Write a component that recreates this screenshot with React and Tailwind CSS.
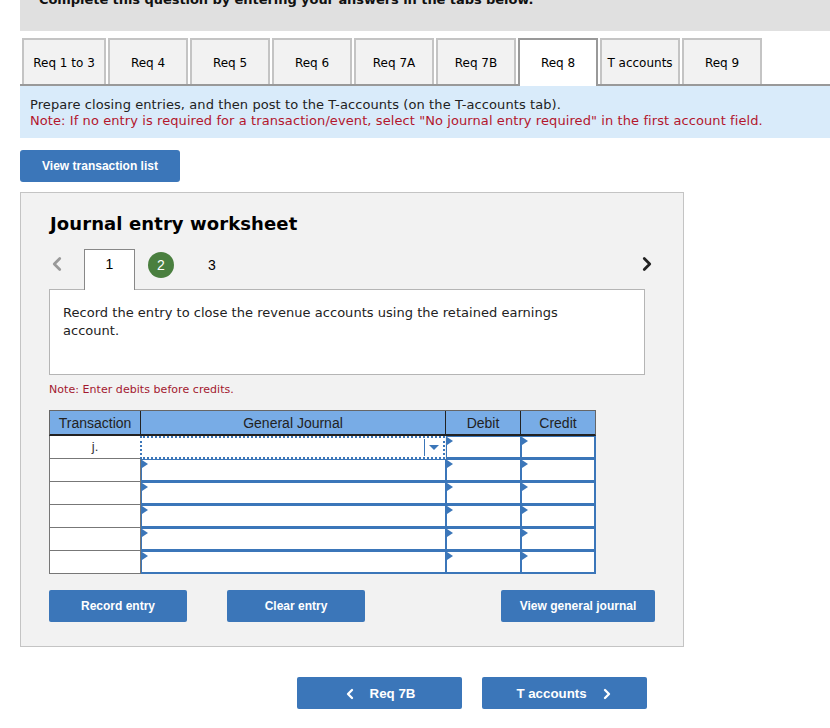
import { ChevronLeft, ChevronRight } from "lucide-react";

const verdana = "font-['DejaVu_Sans',Verdana,sans-serif]";
const arial = "font-['Liberation_Sans',Arial,sans-serif]";

const tabs = ["Req 1 to 3", "Req 4", "Req 5", "Req 6", "Req 7A", "Req 7B", "Req 8", "T accounts", "Req 9"];

const Marker = () => (
  <span className="absolute left-0 top-0 w-0 h-0 border-y-[4px] border-y-transparent border-l-[6px] border-l-[#3b76b9]"></span>
);

const Row = ({ first }) => (
  <div className="flex h-[23px]">
    <div className={`w-[92px] shrink-0 bg-white border-l border-r border-b border-[#777] flex items-center justify-center text-[13px] text-[#333] ${arial}`}>
      {first ? "j." : ""}
    </div>
    {first ? (
      <div className="w-[305px] shrink-0 bg-white border-2 border-dotted border-[#3b76b9] -ml-px flex justify-end">
        <div className="w-[19px] my-px border-l border-[#3b76b9] flex items-center justify-center">
          <span className="w-0 h-0 border-x-[5px] border-x-transparent border-t-[5px] border-t-[#3b76b9]"></span>
        </div>
      </div>
    ) : (
      <div className="relative w-[305px] shrink-0 bg-white border border-b-2 border-[#3b76b9]">
        <Marker />
      </div>
    )}
    <div className={`relative w-[75px] shrink-0 bg-white border border-b-2 border-[#3b76b9] ${first ? "ml-px" : ""}`}>
      <Marker />
    </div>
    <div className="relative w-[75px] shrink-0 bg-white border border-b-2 border-r-2 border-[#3b76b9]">
      <Marker />
    </div>
  </div>
);

const App = () => {
  return (
    <div className={`w-[830px] h-[728px] overflow-hidden bg-white text-black ${verdana}`}>
      <div className="ml-5 h-[31px] bg-[#e0e0e0] overflow-hidden pl-[19px]">
        <div className="-mt-[9px] text-[13px] leading-[18px] font-bold tracking-[-0.06px] text-[#111] whitespace-nowrap">
          Complete this question by entering your answers in the tabs below.
        </div>
      </div>

      <div className="ml-5 mt-[7px] h-[48px] pl-0.5 flex gap-0.5 border-b-2 border-[#999]">
        {tabs.map((tab) => {
          const active = tab === "Req 8";
          return (
            <div
              key={tab}
              className={`${tab === "Req 1 to 3" ? "w-[84px]" : "w-20"} flex items-center justify-center text-[12px] whitespace-nowrap border-2 border-b-0 ${
                active ? "bg-white border-[#999] h-[48px]" : "bg-[#f2f2f2] border-[#c4c4c4] h-[46px] pt-0.5"
              }`}
            >
              {tab}
            </div>
          );
        })}
      </div>

      <div className="ml-5 h-[52px] bg-[#d9ebfa] pl-2.5 pt-[11px] text-[13px] leading-4 tracking-[0.087px] whitespace-nowrap">
        <div className="text-[#222]">Prepare closing entries, and then post to the T-accounts (on the T-accounts tab).</div>
        <div className="text-[#b3172d]">Note: If no entry is required for a transaction/event, select "No journal entry required" in the first account field.</div>
      </div>

      <button className={`block ml-5 mt-3 w-40 h-8 bg-[#3b76b9] rounded-[3px] text-white text-[12px] font-bold ${arial}`}>
        View transaction list
      </button>

      <div className="ml-5 mt-2.5 w-[664px] h-[455px] bg-[#f2f2f2] border border-[#c4c4c4] pl-7">
        <h2 className="mt-[19px] ml-px text-[18px] leading-6 font-bold tracking-[0.1px]">Journal entry worksheet</h2>

        <div className="mt-[13px] h-[41px] flex">
          <div className="-ml-[3px] w-[38px] h-[29px] flex items-center text-[#999]">
            <ChevronLeft size={22} strokeWidth={3} />
          </div>
          <div className={`w-[51px] h-[41px] bg-white border border-b-0 border-[#888] z-10 flex items-center justify-center pb-[11px] text-[14px] ${arial}`}>1</div>
          <div className="ml-[13px] mt-[3px] w-[26px] h-[26px] rounded-full bg-[#4a7f3f] text-white flex items-center justify-center text-[14px]">
            <span className={arial}>2</span>
          </div>
          <div className={`ml-[34px] mt-[3px] h-[26px] flex items-center text-[14px] ${arial}`}>3</div>
          <div className="ml-auto mr-[25px] h-[29px] flex items-center text-[#222]">
            <ChevronRight size={22} strokeWidth={3} />
          </div>
        </div>

        <div className="-mt-px w-[596px] h-[86px] bg-white border border-[#b5b5b5] pl-[13px] pr-[80px] pt-[14px] text-[13px] leading-[18px] tracking-[0.03px] text-[#222]">
          Record the entry to close the revenue accounts using the retained earnings account.
        </div>

        <div className="mt-[7px] text-[11px] leading-4 tracking-[0.05px] text-[#a3182f]">Note: Enter debits before credits.</div>

        <div className={`mt-3 w-[547px] flex h-[26px] bg-[#78ace6] border border-[#666] border-b-2 border-b-[#222] text-[14px] text-[#222] ${arial}`}>
          <div className="w-[91px] shrink-0 border-r border-[#222] pt-0.5 flex items-center justify-center">Transaction</div>
          <div className="w-[305px] shrink-0 border-r border-[#222] pt-0.5 flex items-center justify-center">General Journal</div>
          <div className="w-[75px] shrink-0 border-r border-[#222] pt-0.5 flex items-center justify-center">Debit</div>
          <div className="flex-1 pt-0.5 flex items-center justify-center">Credit</div>
        </div>
        <div className="w-[547px]">
          <Row first />
          <Row />
          <Row />
          <Row />
          <Row />
          <Row />
        </div>

        <div className={`mt-4 flex w-[606px] text-white text-[12px] font-bold ${arial}`}>
          <button className="w-[138px] h-8 bg-[#3b76b9] rounded-[2px]">Record entry</button>
          <button className="ml-10 w-[138px] h-8 bg-[#3b76b9] rounded-[2px]">Clear entry</button>
          <button className="ml-auto w-[154px] h-8 bg-[#3b76b9] rounded-[2px]">View general journal</button>
        </div>
      </div>

      <div className={`mt-[30px] ml-[297px] flex gap-5 text-white text-[13.3px] font-bold ${arial}`}>
        <button className="w-[165px] h-8 pr-0.5 pt-px bg-[#3b76b9] rounded-[2px] flex items-center justify-center gap-3">
          <ChevronLeft size={16} strokeWidth={3.5} />
          Req 7B
        </button>
        <button className="w-[165px] h-8 pl-0.5 pt-px bg-[#3b76b9] rounded-[2px] flex items-center justify-center gap-3">
          T accounts
          <ChevronRight size={16} strokeWidth={3.5} />
        </button>
      </div>
    </div>
  );
};

export default App;
